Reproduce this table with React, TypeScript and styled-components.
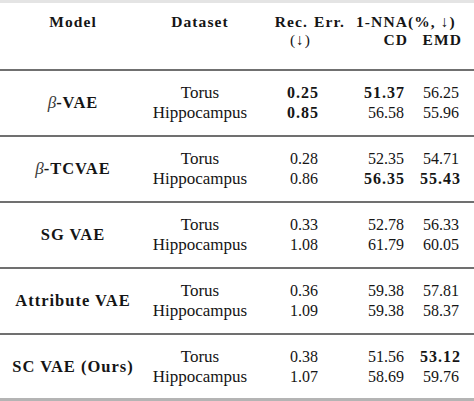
import React from "react";
import styled, { createGlobalStyle } from "styled-components";

const Global = createGlobalStyle`
  html, body { margin: 0; padding: 0; background: #fff; }
  body { font-family: "Liberation Serif", "DejaVu Serif", serif; color: #151515; }
`;

const Table = styled.div`
  width: 474px;
  height: 401px;
  overflow: hidden;
  background: #fff;
  display: flex;
  flex-direction: column;
`;

const TopBand = styled.div`
  height: 3px;
  background: #e4e4e4;
`;

const cols = "146px 108px 93px 73px 54px";

const Header = styled.div`
  height: 66px;
  box-sizing: border-box;
  padding-top: 10px;
  display: grid;
  grid-template-columns: ${cols};
  grid-template-rows: 18px 18px;
  align-items: center;
`;

const Rule = styled.div<{ $light?: boolean }>`
  height: ${(p) => (p.$light ? "3px" : "2px")};
  background: ${(p) => (p.$light ? "#b4b4b4" : "#707070")};
`;

const Block = styled.div<{ $h: number }>`
  height: ${(p) => p.$h}px;
  display: grid;
  grid-template-columns: ${cols};
  grid-template-rows: 20px 20px;
  align-content: center;
  align-items: center;
`;

const HeadCell = styled.div<{
  $col: string;
  $row: number;
  $align?: "left" | "center" | "right";
  $pr?: number;
  $pl?: number;
}>`
  grid-column: ${(p) => p.$col};
  grid-row: ${(p) => p.$row};
  text-align: ${(p) => p.$align || "center"};
  padding-right: ${(p) => p.$pr || 0}px;
  padding-left: ${(p) => p.$pl || 0}px;
  font-weight: bold;
  font-size: 15.5px;
  letter-spacing: 1.1px;
  white-space: nowrap;
  line-height: 18px;
`;

const Arrow = styled.span`
  font-weight: normal;
  letter-spacing: 1px;
`;

const Gap = styled.span`
  display: inline-block;
  width: 6px;
`;

const ModelCell = styled.div`
  grid-column: 1;
  grid-row: 1 / span 2;
  text-align: center;
  font-weight: bold;
  font-size: 16.5px;
  letter-spacing: 1px;
  white-space: nowrap;
`;

const Beta = styled.i`
  font-weight: normal;
  letter-spacing: 0;
  font-size: 17px;
  color: #3a3a3a;
`;

const DataCell = styled.div<{ $row: number }>`
  grid-column: 2;
  grid-row: ${(p) => p.$row};
  text-align: center;
  font-size: 17px;
  line-height: 20px;
  white-space: nowrap;
`;

const Num = styled.div<{ $col: number; $row: number; $pr: number; $bold?: boolean }>`
  grid-column: ${(p) => p.$col};
  grid-row: ${(p) => p.$row};
  text-align: right;
  padding-right: ${(p) => p.$pr - (p.$bold ? 1 : 0)}px;
  font-size: 16px;
  line-height: 20px;
  font-weight: ${(p) => (p.$bold ? "bold" : "normal")};
  letter-spacing: ${(p) => (p.$bold ? "1px" : "0")};
  white-space: nowrap;
`;

type V = [string, boolean?];
type Row = { ds: string; rec: V; cd: V; emd: V };
type Model = { name: React.ReactNode; rows: Row[] };

const models: Model[] = [
  {
    name: (
      <>
        <Beta>β</Beta>-VAE
      </>
    ),
    rows: [
      { ds: "Torus", rec: ["0.25", true], cd: ["51.37", true], emd: ["56.25"] },
      { ds: "Hippocampus", rec: ["0.85", true], cd: ["56.58"], emd: ["55.96"] },
    ],
  },
  {
    name: (
      <>
        <Beta>β</Beta>-TCVAE
      </>
    ),
    rows: [
      { ds: "Torus", rec: ["0.28"], cd: ["52.35"], emd: ["54.71"] },
      { ds: "Hippocampus", rec: ["0.86"], cd: ["56.35", true], emd: ["55.43", true] },
    ],
  },
  {
    name: "SG VAE",
    rows: [
      { ds: "Torus", rec: ["0.33"], cd: ["52.78"], emd: ["56.33"] },
      { ds: "Hippocampus", rec: ["1.08"], cd: ["61.79"], emd: ["60.05"] },
    ],
  },
  {
    name: "Attribute VAE",
    rows: [
      { ds: "Torus", rec: ["0.36"], cd: ["59.38"], emd: ["57.81"] },
      { ds: "Hippocampus", rec: ["1.09"], cd: ["59.38"], emd: ["58.37"] },
    ],
  },
  {
    name: "SC VAE (Ours)",
    rows: [
      { ds: "Torus", rec: ["0.38"], cd: ["51.56"], emd: ["53.12", true] },
      { ds: "Hippocampus", rec: ["1.07"], cd: ["58.69"], emd: ["59.76"] },
    ],
  },
];

export default function App() {
  return (
    <>
      <Global />
      <Table>
        <TopBand />
        <Header>
          <HeadCell $col="1" $row={1}>Model</HeadCell>
          <HeadCell $col="2" $row={1}>Dataset</HeadCell>
          <HeadCell $col="3" $row={1} $align="right" $pr={2}>
            Rec.<Gap />Err.
          </HeadCell>
          <HeadCell $col="3" $row={2} $pl={-6}>
            <Arrow>(↓)</Arrow>
          </HeadCell>
          <HeadCell $col="4 / span 2" $row={1} $align="left" $pl={9}>
            1-NNA(%, <Arrow>↓</Arrow>)
          </HeadCell>
          <HeadCell $col="4" $row={2} $align="right" $pr={12}>CD</HeadCell>
          <HeadCell $col="5" $row={2} $align="right" $pr={12}>EMD</HeadCell>
        </Header>
        {models.map((m, i) => (
          <React.Fragment key={i}>
            <Rule />
            <Block $h={i === 4 ? 63 : 64}>
              <ModelCell>{m.name}</ModelCell>
              {m.rows.map((r, j) => (
                <React.Fragment key={j}>
                  <DataCell $row={j + 1}>{r.ds}</DataCell>
                  <Num $col={3} $row={j + 1} $pr={29} $bold={r.rec[1]}>{r.rec[0]}</Num>
                  <Num $col={4} $row={j + 1} $pr={16} $bold={r.cd[1]}>{r.cd[0]}</Num>
                  <Num $col={5} $row={j + 1} $pr={15} $bold={r.emd[1]}>{r.emd[0]}</Num>
                </React.Fragment>
              ))}
            </Block>
          </React.Fragment>
        ))}
        <Rule $light />
      </Table>
    </>
  );
}
